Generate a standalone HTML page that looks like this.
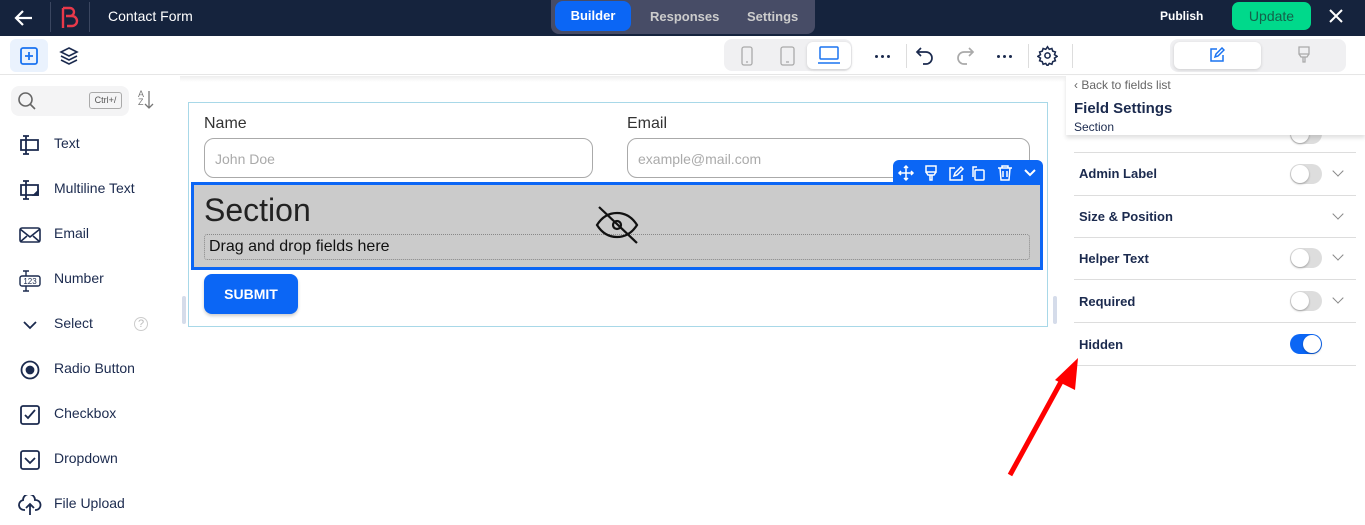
<!DOCTYPE html>
<html><head><meta charset="utf-8"><style>
*{box-sizing:border-box;margin:0;padding:0}
body{width:1365px;height:525px;overflow:hidden;background:#fff;font-family:"Liberation Sans",sans-serif;position:relative;color:#1b2a4e}
.a{position:absolute}
.hdr{left:0;top:0;width:1365px;height:36px;background:#15233d}
.tb{left:0;top:36px;width:1365px;height:39px;background:#fff;border-bottom:1px solid #e6e6e6}
.side .it{position:absolute;left:18px;font-size:14px;color:#1b2a4e}
.side .it span{position:absolute;left:36px;top:0;white-space:nowrap}
.row{position:absolute;left:1074px;width:282px;border-bottom:1px solid #ddd;font-size:13px;font-weight:bold;color:#1b2a4e}
.tg{position:absolute;left:216px;width:32px;height:20px;border-radius:10px;background:#ddd}
.tg:after{content:"";position:absolute;left:1px;top:1px;width:18px;height:18px;border-radius:50%;background:#fff;box-shadow:0 1px 2px rgba(0,0,0,.3)}
.tg.on{background:#0b66f5}.tg.on:after{left:13px}
.chev{position:absolute;left:260px;width:8px;height:8px;border-right:1.5px solid #888;border-bottom:1.5px solid #888;transform:rotate(45deg)}
.dots{position:absolute;display:flex;gap:3px}.dots i{width:3px;height:3px;border-radius:50%;background:#1b2a4e}
</style></head><body>
<div class="a hdr"></div>
<svg class="a" style="left:12px;top:6px" width="24" height="24" viewBox="0 0 24 24" fill="none" stroke="#fff" stroke-width="2.2"><path d="M20 12H5M11 5l-7 7 7 7"/></svg>
<div class="a" style="left:50px;top:2px;width:1px;height:30px;background:#3a4660"></div>
<svg class="a" style="left:60px;top:6px" width="20" height="24" viewBox="0 0 20 24" fill="none" stroke="#e8394a" stroke-width="2.4"><path d="M3 2v20M3 2h7a4 4 0 010 8H6M6 10h6a5 5 0 010 10H7"/></svg>
<div class="a" style="left:89px;top:2px;width:1px;height:30px;background:#3a4660"></div>
<div class="a" style="left:108px;top:8px;color:#fff;font-size:14px">Contact Form</div>
<div class="a" style="left:551px;top:0;width:264px;height:34px;background:#474c66;border-radius:0 0 8px 8px"></div>
<div class="a" style="left:555px;top:1px;width:76px;height:30px;background:#0b66f5;border-radius:8px;color:#fff;font-size:13px;font-weight:bold;text-align:center;line-height:30px">Builder</div>
<div class="a" style="left:650px;top:9px;color:#ccc;font-size:13px;font-weight:bold">Responses</div>
<div class="a" style="left:747px;top:9px;color:#ccc;font-size:13px;font-weight:bold">Settings</div>
<div class="a" style="left:1160px;top:9px;color:#fff;font-size:12px;font-weight:bold">Publish</div>
<div class="a" style="left:1232px;top:2px;width:79px;height:28px;background:#00d98b;border-radius:7px;color:#14614a;font-size:14px;text-align:center;line-height:28px">Update</div>
<svg class="a" style="left:1328px;top:8px" width="16" height="16" viewBox="0 0 16 16" stroke="#fff" stroke-width="2"><path d="M2 2l12 12M14 2L2 14"/></svg>

<div class="a tb"></div>
<div class="a" style="left:10px;top:39px;width:38px;height:33px;background:#eaf2fd;border-radius:6px"></div>
<svg class="a" style="left:19px;top:46px" width="20" height="20" viewBox="0 0 20 20" fill="none" stroke="#1a73f0" stroke-width="1.8"><rect x="2" y="2" width="16" height="16" rx="2"/><path d="M10 6v8M6 10h8"/></svg>
<svg class="a" style="left:59px;top:46px" width="20" height="20" viewBox="0 0 20 20" fill="none" stroke="#1b2a4e" stroke-width="1.6"><path d="M10 2l8 4-8 4-8-4zM2 10l8 4 8-4M2 14l8 4 8-4"/></svg>
<div class="a" style="left:724px;top:39px;width:128px;height:32px;background:#f0f0f2;border-radius:8px"></div>
<div class="a" style="left:807px;top:42px;width:44px;height:27px;background:#fff;border-radius:6px;box-shadow:0 1px 3px rgba(0,0,0,.15)"></div>
<svg class="a" style="left:740px;top:46px" width="14" height="20" viewBox="0 0 14 20" fill="none" stroke="#aaa" stroke-width="1.3"><rect x="2" y="1" width="10" height="18" rx="2"/><path d="M6 16h2"/></svg>
<svg class="a" style="left:779px;top:46px" width="18" height="20" viewBox="0 0 18 20" fill="none" stroke="#aaa" stroke-width="1.3"><rect x="2" y="1" width="13" height="18" rx="2"/><path d="M7 16h3"/></svg>
<svg class="a" style="left:817px;top:46px" width="24" height="18" viewBox="0 0 24 18" fill="none" stroke="#1a73f0" stroke-width="1.5"><rect x="3" y="1" width="18" height="12" rx="1"/><path d="M1 17h22"/></svg>
<div class="dots" style="left:875px;top:55px"><i></i><i></i><i></i></div>
<div class="a" style="left:906px;top:44px;width:1px;height:24px;background:#ddd"></div>
<svg class="a" style="left:914px;top:45px" width="22" height="22" viewBox="0 0 22 22" fill="none" stroke="#1b2a4e" stroke-width="1.7"><path d="M7 3L3 7l4 4M3 7h9a6 6 0 010 12H9"/></svg>
<svg class="a" style="left:954px;top:45px" width="22" height="22" viewBox="0 0 22 22" fill="none" stroke="#aaa" stroke-width="1.7"><path d="M15 3l4 4-4 4M19 7h-9a6 6 0 000 12h3"/></svg>
<div class="dots" style="left:997px;top:55px"><i></i><i></i><i></i></div>
<div class="a" style="left:1028px;top:44px;width:1px;height:24px;background:#ddd"></div>
<svg class="a" style="left:1037px;top:45px" width="21" height="21" viewBox="0 0 24 24" fill="none" stroke="#1b2a4e" stroke-width="1.8"><circle cx="12" cy="12" r="3"/><path d="M12 2l2 3 3-1 1 3 3 1-1 3 3 2-3 2 1 3-3 1-1 3-3-1-2 3-2-3-3 1-1-3-3-1 1-3-3-2 3-2-1-3 3-1 1-3 3 1z"/></svg>
<div class="a" style="left:1072px;top:44px;width:1px;height:24px;background:#ddd"></div>
<div class="a" style="left:1170px;top:39px;width:176px;height:33px;background:#f0f0f2;border-radius:8px"></div>
<div class="a" style="left:1174px;top:42px;width:87px;height:27px;background:#fff;border-radius:6px;box-shadow:0 1px 3px rgba(0,0,0,.15)"></div>
<svg class="a" style="left:1209px;top:47px" width="16" height="16" viewBox="0 0 16 16" fill="none" stroke="#1a73f0" stroke-width="1.5"><path d="M8 2H2v12h12V8M6 10l1-3 6-6 2 2-6 6z"/></svg>
<svg class="a" style="left:1297px;top:46px" width="14" height="18" viewBox="0 0 14 18" fill="none" stroke="#aaa" stroke-width="1.3"><path d="M2 1h10v7H2zM2 8l2 3h6l2-3M6 11v5h2v-5"/></svg>

<div class="a" style="left:11px;top:86px;width:118px;height:30px;background:#f4f4f5;border-radius:8px"></div>
<svg class="a" style="left:17px;top:91px" width="20" height="20" viewBox="0 0 20 20" fill="none" stroke="#666" stroke-width="1.6"><circle cx="8.5" cy="8.5" r="6.5"/><path d="M13 13l5 5"/></svg>
<div class="a" style="left:89px;top:92px;width:33px;height:17px;border:1px solid #aaa;border-radius:3px;font-size:9px;color:#555;text-align:center;line-height:15px">Ctrl+/</div>
<div class="a" style="left:138px;top:90px;font-size:9px;color:#777;line-height:8px">A<br>Z</div>
<svg class="a" style="left:144px;top:90px" width="10" height="20" viewBox="0 0 10 20" fill="none" stroke="#777" stroke-width="1.3"><path d="M5 1v17M1 14l4 4 4-4"/></svg>
<div class="side">
<div class="it" style="top:135px"><svg width="24" height="20" viewBox="0 0 24 20" fill="none" stroke="#1b2a4e" stroke-width="1.8"><path d="M8 1v18M5 1h6M5 19h6M8 5H3v10h5M8 5h12v10H8"/></svg><span>Text</span></div>
<div class="it" style="top:180px"><svg width="24" height="20" viewBox="0 0 24 20" fill="none" stroke="#1b2a4e" stroke-width="1.8"><path d="M8 1v18M5 1h6M5 19h6M8 5H3v10h5M8 5h12v10H8"/><path d="M16 15l4-4v4z" fill="#1b2a4e"/></svg><span>Multiline Text</span></div>
<div class="it" style="top:225px"><svg width="24" height="20" viewBox="0 0 24 20" fill="none" stroke="#1b2a4e" stroke-width="1.6"><rect x="2" y="3" width="20" height="14" rx="2"/><path d="M2 4l10 8 10-8M2 17l7-6M22 17l-7-6"/></svg><span>Email</span></div>
<div class="it" style="top:270px"><svg width="24" height="22" viewBox="0 0 24 22" fill="none" stroke="#1b2a4e" stroke-width="1.4"><path d="M8 1v20M5 1h6M5 21h6"/><rect x="2" y="6" width="20" height="10" rx="2" fill="#fff"/><text x="12" y="14" font-size="8" text-anchor="middle" fill="#1b2a4e" stroke="none" font-family="Liberation Sans">123</text></svg><span>Number</span></div>
<div class="it" style="top:315px"><svg width="24" height="20" viewBox="0 0 24 20" fill="none" stroke="#1b2a4e" stroke-width="1.8"><path d="M6 7l6 6 6-6"/></svg><span>Select</span><span style="left:116px;color:#bbb;font-size:11px;border:1px solid #ccc;border-radius:50%;width:14px;height:14px;text-align:center;line-height:13px;top:2px">?</span></div>
<div class="it" style="top:360px"><svg width="24" height="20" viewBox="0 0 24 20" fill="none" stroke="#1b2a4e" stroke-width="1.8"><circle cx="12" cy="10" r="8.5"/><circle cx="12" cy="10" r="3.5" fill="#1b2a4e"/></svg><span>Radio Button</span></div>
<div class="it" style="top:405px"><svg width="24" height="20" viewBox="0 0 24 20" fill="none" stroke="#1b2a4e" stroke-width="1.8"><rect x="3" y="1" width="18" height="18" rx="2"/><path d="M7 10l3 3 7-8"/></svg><span>Checkbox</span></div>
<div class="it" style="top:450px"><svg width="24" height="20" viewBox="0 0 24 20" fill="none" stroke="#1b2a4e" stroke-width="1.8"><rect x="3" y="1" width="18" height="18" rx="2"/><path d="M7 8l5 5 5-5"/></svg><span>Dropdown</span></div>
<div class="it" style="top:495px"><svg width="24" height="20" viewBox="0 0 24 20" fill="none" stroke="#1b2a4e" stroke-width="1.8"><path d="M7 15H6a5 5 0 01-1-9.9A6 6 0 0117 5a5 5 0 011 10h-1M12 9v11M8 13l4-4 4 4"/></svg><span>File Upload</span></div>
</div>

<div class="a" style="left:180px;top:76px;width:886px;height:6px;background:linear-gradient(#eee,#fff)"></div>
<div class="a" style="left:182px;top:296px;width:4px;height:28px;background:#d5dcea;border-radius:2px"></div>
<div class="a" style="left:1053px;top:296px;width:4px;height:28px;background:#d5dcea;border-radius:2px"></div>
<div class="a" style="left:188px;top:102px;width:860px;height:225px;border:1px solid #a8d8e8"></div>
<div class="a" style="left:204px;top:115px;font-size:16px;color:#333">Name</div>
<div class="a" style="left:204px;top:138px;width:389px;height:40px;border:1px solid #aaa;border-radius:10px;padding:12px 10px;font-size:14px;color:#aaa">John Doe</div>
<div class="a" style="left:627px;top:115px;font-size:16px;color:#333">Email</div>
<div class="a" style="left:627px;top:138px;width:403px;height:40px;border:1px solid #aaa;border-radius:10px;padding:12px 10px;font-size:14px;color:#aaa">example@mail.com</div>
<div class="a" style="left:191px;top:182px;width:852px;height:88px;background:#cbcbcb;border:3px solid #0b66f5"></div>
<div class="a" style="left:204px;top:192px;font-size:32px;color:#222">Section</div>
<div class="a" style="left:204px;top:234px;width:826px;height:26px;border:1px dotted #888;border-radius:3px;font-size:16px;color:#111;padding:3px 4px">Drag and drop fields here</div>
<svg class="a" style="left:594px;top:205px" width="46" height="42" viewBox="0 0 46 42" fill="none" stroke="#111" stroke-width="2.2"><path d="M3 20c5-8 12-12 20-12s15 4 20 12c-5 8-12 12-20 12S8 28 3 20z"/><circle cx="23" cy="20" r="4"/><path d="M5 2l38 36"/></svg>
<div class="a" style="left:893px;top:160px;width:150px;height:25px;background:#0b66f5;border-radius:6px 6px 0 0"></div>
<svg class="a" style="left:897px;top:164px" width="145" height="18" viewBox="0 0 145 18" fill="none" stroke="#fff" stroke-width="1.5">
<path d="M9 2v14M2 9h14M7 4l2-2 2 2M7 14l2 2 2-2M4 7L2 9l2 2M14 7l2 2-2 2"/>
<path d="M29 2h10v6H29zM29 8l2 3h6l2-3M33 11v5h2v-5"/>
<path d="M58 4h-5v12h12v-5M57 12l1-3 6-6 2 2-6 6z"/>
<rect x="78" y="6" width="9" height="10" rx="1"/><path d="M80 3h-4v10"/>
<path d="M101 4h14M105 4V2h6v2M103 4l1 12h8l1-12M106 7v6M110 7v6"/>
<path d="M128 6l5 5 5-5" stroke-width="2"/>
</svg>
<div class="a" style="left:204px;top:274px;width:94px;height:40px;background:#0b66f5;border-radius:8px;color:#fff;font-weight:bold;font-size:14px;text-align:center;line-height:40px;box-shadow:0 2px 3px rgba(0,0,0,.2)">SUBMIT</div>

<div class="row" style="top:120px;height:33px"><div class="tg" style="top:4px"></div></div>
<div class="a" style="left:1066px;top:76px;width:299px;height:59px;background:#fff;box-shadow:0 3px 4px rgba(0,0,0,.12)"></div>
<div class="a" style="left:1074px;top:78px;font-size:12px;color:#666">‹ Back to fields list</div>
<div class="a" style="left:1074px;top:100px;font-size:15px;font-weight:bold;color:#1b2a4e">Field Settings</div>
<div class="a" style="left:1074px;top:120px;font-size:12px;color:#1b2a4e">Section</div>
<div class="row" style="top:153px;height:43px;padding:13px 5px">Admin Label<div class="tg" style="top:11px"></div><div class="chev" style="top:14px"></div></div>
<div class="row" style="top:196px;height:42px;padding:13px 5px">Size &amp; Position<div class="chev" style="top:14px"></div></div>
<div class="row" style="top:238px;height:42px;padding:13px 5px">Helper Text<div class="tg" style="top:10px"></div><div class="chev" style="top:13px"></div></div>
<div class="row" style="top:280px;height:43px;padding:14px 5px">Required<div class="tg" style="top:11px"></div><div class="chev" style="top:14px"></div></div>
<div class="row" style="top:323px;height:43px;padding:14px 5px">Hidden<div class="tg on" style="top:11px"></div></div>
<svg class="a" style="left:1000px;top:350px" width="90" height="130" viewBox="0 0 90 130" fill="none"><path d="M10 125L62 30" stroke="#f00" stroke-width="5"/><path d="M78 8L55 30l20 10z" fill="#f00"/></svg>
</body></html>
